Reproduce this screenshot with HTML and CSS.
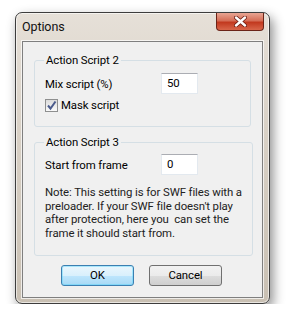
FILE: index.html
```html
<!DOCTYPE html>
<html lang="en">
<head>
    <meta charset="UTF-8">
    <title>Options</title>
    <link rel="stylesheet" href="styles.css">
</head>
<body>
    <div class="window">
        <div class="titlebar">
            <span class="title">Options</span>
            <div class="close-btn">
                <svg width="13" height="11" viewBox="0 0 13 11">
                    <path d="M2 1.5 L11 9.5 M11 1.5 L2 9.5" stroke="#6a1a10" stroke-width="4" stroke-linecap="round"/>
                    <path d="M2 1.5 L11 9.5 M11 1.5 L2 9.5" stroke="#ffffff" stroke-width="2.4" stroke-linecap="round"/>
                </svg>
            </div>
        </div>

        <div class="client">
            <fieldset class="group">
                <legend>Action Script 2</legend>
                <div class="row">
                    <span class="label">Mix script (%)</span>
                    <div class="textbox">50</div>
                </div>
                <div class="check-row">
                    <span class="checkbox">
                        <svg width="11" height="11" viewBox="0 0 11 11">
                            <path d="M2 5.5 L4.5 8.5 L9.5 1.5" fill="none" stroke="#4b5b8c" stroke-width="2"/>
                        </svg>
                    </span>
                    <span>Mask script</span>
                </div>
            </fieldset>

            <fieldset class="group group-second">
                <legend>Action Script 3</legend>
                <div class="row">
                    <span class="label">Start from frame</span>
                    <div class="textbox">0</div>
                </div>
                <p class="note">Note: This setting is for SWF files with a<br>preloader. If your SWF file doesn't play<br>after protection, here you&nbsp; can set the<br>frame it should start from.</p>
            </fieldset>

            <div class="buttons">
                <div class="btn btn-default">OK</div>
                <div class="btn">Cancel</div>
            </div>
        </div>
    </div>
</body>
</html>
```

FILE: styles.css
```css
body {
    margin: 0;
    background-color: #fff;
    font-family: Roboto, "Noto Sans", sans-serif;
    font-size: 11.4px;
    letter-spacing: -0.1px;
    color: #000;
}

.window {
    margin: 12px 0 0 15px;
    width: 255px;
    height: 292px;
    box-sizing: border-box;
    border: 1px solid #3d3d3d;
    border-radius: 7px;
    background: linear-gradient(180deg, #e6e0d8 0%, #d9d1c6 40%, #c9c0b3 100%);
    box-shadow: 3px 5px 12px rgba(0, 0, 0, 0.45), inset 0 0 0 1px rgba(255, 255, 255, 0.6);
    display: flex;
    flex-direction: column;
}

.titlebar {
    height: 28px;
    display: flex;
    justify-content: space-between;
    align-items: flex-start;
}

.title {
    margin: 6px 0 0 6px;
    font-size: 12.5px;
    color: #111;
}

.close-btn {
    width: 48px;
    height: 18px;
    margin-right: 5px;
    box-sizing: border-box;
    border: 1px solid #6b2418;
    border-top: none;
    border-radius: 0 0 4px 4px;
    background: linear-gradient(180deg, #e8a593 0%, #d56e57 45%, #c2391f 55%, #d8664a 100%);
    display: flex;
    align-items: center;
    justify-content: center;
}

.client {
    flex: 1;
    margin: 0 6px 5px 6px;
    border: 1px solid #7f7f7f;
    background-color: #f0f0f0;
    padding: 11px 11px 0 11px;
    box-shadow: 0 0 0 1px rgba(255, 255, 255, 0.7);
}

.group {
    margin: 0;
    height: 74px;
    box-sizing: border-box;
    padding: 5px 10px 0 10px;
    border: 1px solid #d5dfe5;
    border-radius: 3px;
}

.group legend {
    padding: 0 2px;
    margin-left: -1px;
    line-height: 15px;
}

.group-second {
    margin-top: 8px;
    height: 121px;
    padding-top: 4px;
}

.row {
    display: flex;
    align-items: center;
    height: 21px;
}

.label {
    width: 116px;
}

.textbox {
    width: 37px;
    height: 21px;
    box-sizing: border-box;
    background-color: #fff;
    border: 1px solid #e3e9ef;
    border-top-color: #abadb3;
    padding: 0 0 0 5px;
    line-height: 19px;
}

.check-row {
    display: flex;
    align-items: center;
    gap: 3px;
    margin-top: 4px;
    height: 14px;
}

.checkbox {
    width: 13px;
    height: 13px;
    box-sizing: border-box;
    border: 1px solid #8e8f8f;
    background: linear-gradient(180deg, #dcdcdc, #fafafa);
    display: flex;
    align-items: center;
    justify-content: center;
}

.note {
    margin: 11px 0 0 0;
    line-height: 13.7px;
    white-space: nowrap;
    color: #222;
}

.buttons {
    display: flex;
    justify-content: center;
    gap: 15px;
    margin-top: 9px;
    padding-right: 2px;
}

.btn {
    width: 73px;
    height: 21px;
    box-sizing: border-box;
    border: 1px solid #707070;
    border-radius: 3px;
    background: linear-gradient(180deg, #f2f2f2 0%, #ebebeb 50%, #dddddd 51%, #cfcfcf 100%);
    text-align: center;
    line-height: 19px;
}

.btn-default {
    border-color: #3c7fb1;
    background: linear-gradient(180deg, #eaf6fd 0%, #d9f0fc 50%, #bee6fd 51%, #a7d9f5 100%);
    box-shadow: inset 0 0 0 1px #48d1fb66;
}
```
